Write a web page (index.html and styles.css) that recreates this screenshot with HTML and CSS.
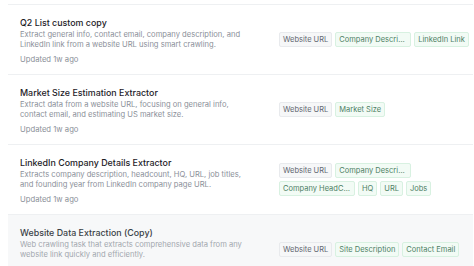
FILE: index.html
```html
<!DOCTYPE html>
<html>
<head>
<meta charset="utf-8">
<link rel="stylesheet" href="styles.css">
</head>
<body>
<div class="list">
  <div class="row">
    <div class="info">
      <div class="title">Q2 List custom copy</div>
      <div class="desc">Extract general info, contact email, company description, and LinkedIn link from a website URL using smart crawling.</div>
      <div class="meta">Updated 1w ago</div>
    </div>
    <div class="tags">
      <span class="tag">Website URL</span>
      <span class="tag out">Company Description</span>
      <span class="tag out">LinkedIn Link</span>
    </div>
  </div>
  <div class="row">
    <div class="info">
      <div class="title">Market Size Estimation Extractor</div>
      <div class="desc">Extract data from a website URL, focusing on general info, contact email, and estimating US market size.</div>
      <div class="meta">Updated 1w ago</div>
    </div>
    <div class="tags">
      <span class="tag">Website URL</span>
      <span class="tag out">Market Size</span>
    </div>
  </div>
  <div class="row">
    <div class="info">
      <div class="title">LinkedIn Company Details Extractor</div>
      <div class="desc">Extracts company description, headcount, HQ, URL, job titles, and founding year from LinkedIn company page URL.</div>
      <div class="meta">Updated 1w ago</div>
    </div>
    <div class="tags">
      <span class="tag">Website URL</span>
      <span class="tag out">Company Description</span>
      <span class="tag out">Company HeadCount</span>
      <span class="tag out">HQ</span>
      <span class="tag out">URL</span>
      <span class="tag out">Jobs</span>
    </div>
  </div>
  <div class="row hover">
    <div class="info">
      <div class="title">Website Data Extraction (Copy)</div>
      <div class="desc">Web crawling task that extracts comprehensive data from any website link quickly and efficiently.</div>
      <div class="meta">Updated 1w ago</div>
    </div>
    <div class="tags">
      <span class="tag">Website URL</span>
      <span class="tag out">Site Description</span>
      <span class="tag out">Contact Email</span>
    </div>
  </div>
</div>
</body>
</html>
```
FILE: styles.css
```css
* { box-sizing: border-box; }
html, body { margin: 0; background: #fff; }
body {
  padding: 4px 1px 0 8px;
  font-family: Inter, "Noto Sans", sans-serif;
  overflow: hidden;
}
.list {
  width: 465px;
  border-top: 1px solid #eef0f2;
}
.row {
  display: flex;
  align-items: center;
  height: 70px;
  padding: 0 2px 0 12px;
  border-bottom: 1px solid #eef0f2;
}
.row.hover { background: #f7f8f9; }
.info {
  width: 235px;
  flex: none;
  padding-top: 1px;
}
.title {
  font-size: 8.9px;
  line-height: 13px;
  font-weight: 500;
  color: #1d2127;
}
.desc {
  margin-top: 1px;
  font-size: 7.6px;
  line-height: 10px;
  color: #8b9099;
}
.meta {
  margin-top: 5px;
  font-size: 7.7px;
  line-height: 10px;
  color: #8b9099;
}
.hover .title { color: #3a3f46; }
.hover .desc { color: #a2a7ae; }
.tags {
  margin-left: 24px;
  flex: 1;
  display: flex;
  flex-wrap: wrap;
  gap: 3px;
}
.tag {
  height: 15px;
  line-height: 13px;
  padding: 0 3px;
  font-size: 7.5px;
  border: 1px solid #e8eaed;
  background: #f6f7f8;
  color: #5f6670;
  border-radius: 2px;
  white-space: nowrap;
  overflow: hidden;
  text-overflow: ellipsis;
  max-width: 76px;
}
.tag.out {
  background: #f2fbf5;
  border-color: #d8f1e1;
  color: #4d8064;
}
```
